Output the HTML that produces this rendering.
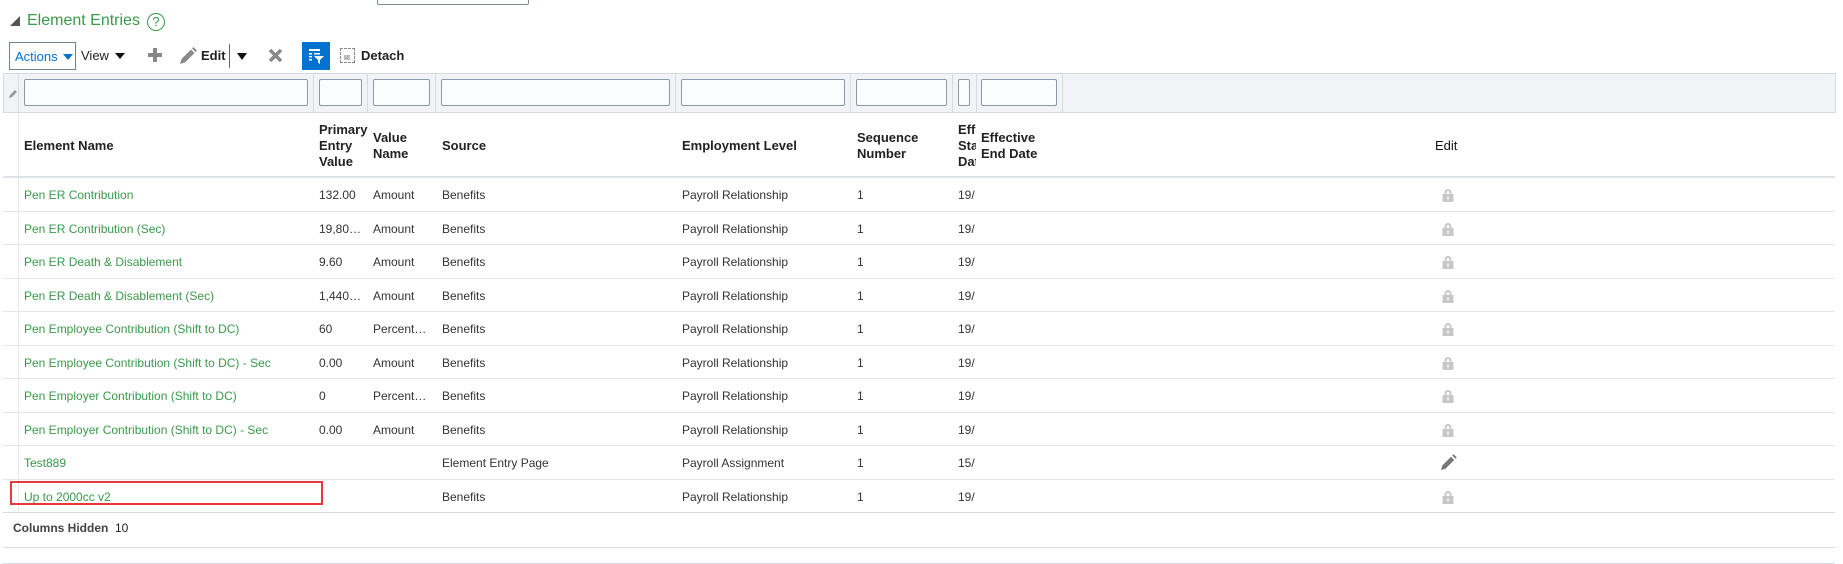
<!DOCTYPE html>
<html><head><meta charset="utf-8"><style>
*{box-sizing:border-box;margin:0;padding:0}
body{width:1843px;height:564px;background:#fff;font-family:"Liberation Sans",Arial,sans-serif;color:#333;position:relative;overflow:hidden}
.a{position:absolute}
.hl{position:absolute;height:1px;background:#e3e7ec}
.vl{position:absolute;width:1px;background:#e3e7ec}
.inp{position:absolute;top:79px;height:27px;border:1px solid #8a9aa8;border-radius:2px;background:#fbfcfd}
.t{position:absolute;font-size:12px;white-space:nowrap;line-height:14px}
.g{color:#3a9a4a}
.h{position:absolute;font-size:13px;font-weight:bold;color:#222;line-height:14px}
.lock{position:absolute;left:1441px;width:14px;height:14px}
</style></head><body>
<div class="a" style="left:377px;top:-2px;width:152px;height:7px;border:1px solid #7a8c9c;border-top:none;border-radius:0 0 2px 2px"></div>
<div class="a" style="left:10px;top:16px;width:0;height:0;border-left:10px solid transparent;border-bottom:10px solid #555"></div>
<div class="a" style="left:27px;top:12px;font-size:16px;color:#3a9a4a">Element Entries</div>
<div class="a" style="left:147px;top:13px;width:18px;height:18px;border:1.5px solid #3a9a4a;border-radius:50%;color:#3a9a4a;font-size:13px;text-align:center;line-height:15px">?</div>
<div class="a" style="left:9px;top:42px;width:67px;height:28px;border:1px solid #6f8394;font-size:13px;color:#0572ce;padding:6px 0 0 5px">Actions <span style="display:inline-block;width:0;height:0;border-left:5px solid transparent;border-right:5px solid transparent;border-top:6px solid #0572ce;vertical-align:1px;margin-left:2px"></span></div>
<div class="a" style="left:81px;top:48px;font-size:13px;color:#222">View <span style="display:inline-block;width:0;height:0;border-left:5px solid transparent;border-right:5px solid transparent;border-top:6px solid #111;vertical-align:1px;margin-left:2px"></span></div>
<svg class="a" style="left:148px;top:48px" width="14" height="14"><path d="M5 0h4v5h5v4H9v5H5V9H0V5h5z" fill="#888"/></svg>
<svg class="a" style="left:179px;top:47px" width="18" height="18"><path d="M1 17l1.5-5L12 2.5l3.5 3.5L6 15.5z M13 1.5l1.5-1.5 3.5 3.5-1.5 1.5z" fill="#8a8a8a"/></svg>
<div class="a" style="left:201px;top:48px;font-size:13px;font-weight:bold;color:#222">Edit</div>
<div class="a" style="left:229px;top:44px;width:1px;height:24px;background:#666"></div>
<div class="a" style="left:237px;top:53px;width:0;height:0;border-left:5px solid transparent;border-right:5px solid transparent;border-top:7px solid #111"></div>
<svg class="a" style="left:268px;top:48px" width="15" height="15"><path d="M2 2L13 13M13 2L2 13" stroke="#888" stroke-width="3.5"/></svg>
<div class="a" style="left:302px;top:42px;width:28px;height:28px;background:#0572ce"></div>
<svg class="a" style="left:308px;top:48px" width="17" height="16"><path d="M1 1h11v2H1zM1 5h3v1.5H1zM6 5h6v1.5H6zM1 8h3v1.5H1zM1 11h3v1.5H1z" fill="#fff"/><path d="M6 8h10l-4 4v4l-2-1.5V12z" fill="#fff"/></svg>
<div class="a" style="left:340px;top:48px;width:15px;height:15px;border:1px dashed #888"></div>
<div class="a" style="left:344px;top:55px;width:6px;height:5px;background:#bbb"></div>
<div class="a" style="left:361px;top:48px;font-size:13px;font-weight:bold;color:#222">Detach</div>
<div class="a" style="left:3px;top:73px;width:1833px;height:40px;background:#f1f3f7;border:1px solid #d6dbe1"></div>
<svg class="a" style="left:9px;top:89px" width="9" height="9"><path d="M0 9l1-3 5-5 2 2-5 5z" fill="#999"/></svg>
<div class="vl" style="left:18px;top:73px;height:40px;background:#d6dbe1"></div>
<div class="vl" style="left:313px;top:73px;height:40px;background:#d6dbe1"></div>
<div class="vl" style="left:367px;top:73px;height:40px;background:#d6dbe1"></div>
<div class="vl" style="left:435px;top:73px;height:40px;background:#d6dbe1"></div>
<div class="vl" style="left:675px;top:73px;height:40px;background:#d6dbe1"></div>
<div class="vl" style="left:850px;top:73px;height:40px;background:#d6dbe1"></div>
<div class="vl" style="left:952px;top:73px;height:40px;background:#d6dbe1"></div>
<div class="vl" style="left:976px;top:73px;height:40px;background:#d6dbe1"></div>
<div class="vl" style="left:1062px;top:73px;height:40px;background:#d6dbe1"></div>
<div class="inp" style="left:24px;width:284px"></div>
<div class="inp" style="left:319px;width:43px"></div>
<div class="inp" style="left:373px;width:57px"></div>
<div class="inp" style="left:441px;width:229px"></div>
<div class="inp" style="left:681px;width:164px"></div>
<div class="inp" style="left:856px;width:91px"></div>
<div class="inp" style="left:958px;width:12px"></div>
<div class="inp" style="left:981px;width:76px"></div>
<div class="vl" style="left:18px;top:113px;height:400px;background:#e3e7ec"></div>
<div class="h" style="left:24px;top:139px">Element Name</div>
<div class="h" style="left:319px;top:122px;line-height:16px">Primary<br>Entry<br>Value</div>
<div class="h" style="left:373px;top:130px;line-height:16px">Value<br>Name</div>
<div class="h" style="left:442px;top:139px">Source</div>
<div class="h" style="left:682px;top:139px">Employment Level</div>
<div class="h" style="left:857px;top:130px;line-height:16px">Sequence<br>Number</div>
<div class="h" style="left:958px;top:122px;line-height:16px;width:18px;overflow:hidden">Effective<br>Start<br>Date</div>
<div class="h" style="left:981px;top:130px;line-height:16px">Effective<br>End Date</div>
<div class="h" style="left:1435px;top:139px;font-weight:normal;color:#111">Edit</div>
<div class="hl" style="left:3px;top:176px;width:1832px;height:2px;background:#dfe3e8"></div>

<div class="t g" style="left:24px;top:188px">Pen ER Contribution</div><div class="t" style="left:319px;top:188px">132.00</div><div class="t" style="left:373px;top:188px">Amount</div><div class="t" style="left:442px;top:188px">Benefits</div><div class="t" style="left:682px;top:188px">Payroll Relationship</div><div class="t" style="left:857px;top:188px">1</div><div class="t" style="left:958px;top:188px">19/</div>
<div class="hl" style="left:3px;top:211px;width:1832px"></div>
<div class="t g" style="left:24px;top:222px">Pen ER Contribution (Sec)</div><div class="t" style="left:319px;top:222px">19,80…</div><div class="t" style="left:373px;top:222px">Amount</div><div class="t" style="left:442px;top:222px">Benefits</div><div class="t" style="left:682px;top:222px">Payroll Relationship</div><div class="t" style="left:857px;top:222px">1</div><div class="t" style="left:958px;top:222px">19/</div>
<div class="hl" style="left:3px;top:244px;width:1832px"></div>
<div class="t g" style="left:24px;top:255px">Pen ER Death &amp; Disablement</div><div class="t" style="left:319px;top:255px">9.60</div><div class="t" style="left:373px;top:255px">Amount</div><div class="t" style="left:442px;top:255px">Benefits</div><div class="t" style="left:682px;top:255px">Payroll Relationship</div><div class="t" style="left:857px;top:255px">1</div><div class="t" style="left:958px;top:255px">19/</div>
<div class="hl" style="left:3px;top:278px;width:1832px"></div>
<div class="t g" style="left:24px;top:289px">Pen ER Death &amp; Disablement (Sec)</div><div class="t" style="left:319px;top:289px">1,440…</div><div class="t" style="left:373px;top:289px">Amount</div><div class="t" style="left:442px;top:289px">Benefits</div><div class="t" style="left:682px;top:289px">Payroll Relationship</div><div class="t" style="left:857px;top:289px">1</div><div class="t" style="left:958px;top:289px">19/</div>
<div class="hl" style="left:3px;top:311px;width:1832px"></div>
<div class="t g" style="left:24px;top:322px">Pen Employee Contribution (Shift to DC)</div><div class="t" style="left:319px;top:322px">60</div><div class="t" style="left:373px;top:322px">Percent…</div><div class="t" style="left:442px;top:322px">Benefits</div><div class="t" style="left:682px;top:322px">Payroll Relationship</div><div class="t" style="left:857px;top:322px">1</div><div class="t" style="left:958px;top:322px">19/</div>
<div class="hl" style="left:3px;top:345px;width:1832px"></div>
<div class="t g" style="left:24px;top:356px">Pen Employee Contribution (Shift to DC) - Sec</div><div class="t" style="left:319px;top:356px">0.00</div><div class="t" style="left:373px;top:356px">Amount</div><div class="t" style="left:442px;top:356px">Benefits</div><div class="t" style="left:682px;top:356px">Payroll Relationship</div><div class="t" style="left:857px;top:356px">1</div><div class="t" style="left:958px;top:356px">19/</div>
<div class="hl" style="left:3px;top:378px;width:1832px"></div>
<div class="t g" style="left:24px;top:389px">Pen Employer Contribution (Shift to DC)</div><div class="t" style="left:319px;top:389px">0</div><div class="t" style="left:373px;top:389px">Percent…</div><div class="t" style="left:442px;top:389px">Benefits</div><div class="t" style="left:682px;top:389px">Payroll Relationship</div><div class="t" style="left:857px;top:389px">1</div><div class="t" style="left:958px;top:389px">19/</div>
<div class="hl" style="left:3px;top:412px;width:1832px"></div>
<div class="t g" style="left:24px;top:423px">Pen Employer Contribution (Shift to DC) - Sec</div><div class="t" style="left:319px;top:423px">0.00</div><div class="t" style="left:373px;top:423px">Amount</div><div class="t" style="left:442px;top:423px">Benefits</div><div class="t" style="left:682px;top:423px">Payroll Relationship</div><div class="t" style="left:857px;top:423px">1</div><div class="t" style="left:958px;top:423px">19/</div>
<div class="hl" style="left:3px;top:445px;width:1832px"></div>
<div class="t g" style="left:24px;top:456px">Test889</div><div class="t" style="left:442px;top:456px">Element Entry Page</div><div class="t" style="left:682px;top:456px">Payroll Assignment</div><div class="t" style="left:857px;top:456px">1</div><div class="t" style="left:958px;top:456px">15/</div>
<div class="hl" style="left:3px;top:479px;width:1832px"></div>
<div class="t g" style="left:24px;top:490px">Up to 2000cc v2</div><div class="t" style="left:442px;top:490px">Benefits</div><div class="t" style="left:682px;top:490px">Payroll Relationship</div><div class="t" style="left:857px;top:490px">1</div><div class="t" style="left:958px;top:490px">19/</div>
<div class="a" style="left:10px;top:481px;width:313px;height:24px;border:2px solid #e8383b"></div>
<div class="hl" style="left:3px;top:512px;width:1832px;background:#d6dbe1"></div>
<div class="t" style="left:13px;top:521px;font-weight:bold;color:#444">Columns Hidden&nbsp; <span style="font-weight:normal;color:#222">10</span></div>
<div class="hl" style="left:3px;top:547px;width:1832px;background:#d6dbe1"></div>
<div class="hl" style="left:3px;top:563px;width:1832px;background:#d6dbe1"></div>

<svg class="lock" style="top:188px" viewBox="0 0 14 14"><path d="M3.5 6V4.5a3.5 3.5 0 0 1 7 0V6h-2V4.5a1.5 1.5 0 0 0-3 0V6z" fill="#c8c8c8"/><rect x="1.5" y="6" width="11" height="8" fill="#c8c8c8"/><rect x="6.3" y="8.5" width="1.4" height="3" fill="#fff"/></svg>
<svg class="lock" style="top:222px" viewBox="0 0 14 14"><path d="M3.5 6V4.5a3.5 3.5 0 0 1 7 0V6h-2V4.5a1.5 1.5 0 0 0-3 0V6z" fill="#c8c8c8"/><rect x="1.5" y="6" width="11" height="8" fill="#c8c8c8"/><rect x="6.3" y="8.5" width="1.4" height="3" fill="#fff"/></svg>
<svg class="lock" style="top:255px" viewBox="0 0 14 14"><path d="M3.5 6V4.5a3.5 3.5 0 0 1 7 0V6h-2V4.5a1.5 1.5 0 0 0-3 0V6z" fill="#c8c8c8"/><rect x="1.5" y="6" width="11" height="8" fill="#c8c8c8"/><rect x="6.3" y="8.5" width="1.4" height="3" fill="#fff"/></svg>
<svg class="lock" style="top:289px" viewBox="0 0 14 14"><path d="M3.5 6V4.5a3.5 3.5 0 0 1 7 0V6h-2V4.5a1.5 1.5 0 0 0-3 0V6z" fill="#c8c8c8"/><rect x="1.5" y="6" width="11" height="8" fill="#c8c8c8"/><rect x="6.3" y="8.5" width="1.4" height="3" fill="#fff"/></svg>
<svg class="lock" style="top:322px" viewBox="0 0 14 14"><path d="M3.5 6V4.5a3.5 3.5 0 0 1 7 0V6h-2V4.5a1.5 1.5 0 0 0-3 0V6z" fill="#c8c8c8"/><rect x="1.5" y="6" width="11" height="8" fill="#c8c8c8"/><rect x="6.3" y="8.5" width="1.4" height="3" fill="#fff"/></svg>
<svg class="lock" style="top:356px" viewBox="0 0 14 14"><path d="M3.5 6V4.5a3.5 3.5 0 0 1 7 0V6h-2V4.5a1.5 1.5 0 0 0-3 0V6z" fill="#c8c8c8"/><rect x="1.5" y="6" width="11" height="8" fill="#c8c8c8"/><rect x="6.3" y="8.5" width="1.4" height="3" fill="#fff"/></svg>
<svg class="lock" style="top:389px" viewBox="0 0 14 14"><path d="M3.5 6V4.5a3.5 3.5 0 0 1 7 0V6h-2V4.5a1.5 1.5 0 0 0-3 0V6z" fill="#c8c8c8"/><rect x="1.5" y="6" width="11" height="8" fill="#c8c8c8"/><rect x="6.3" y="8.5" width="1.4" height="3" fill="#fff"/></svg>
<svg class="lock" style="top:423px" viewBox="0 0 14 14"><path d="M3.5 6V4.5a3.5 3.5 0 0 1 7 0V6h-2V4.5a1.5 1.5 0 0 0-3 0V6z" fill="#c8c8c8"/><rect x="1.5" y="6" width="11" height="8" fill="#c8c8c8"/><rect x="6.3" y="8.5" width="1.4" height="3" fill="#fff"/></svg>
<svg class="a" style="left:1440px;top:454px" width="17" height="17"><path d="M1 16l1.3-4.5L11 2.8l3.2 3.2L5.5 14.7z M12.2 1.6l1.4-1.4 3.2 3.2-1.4 1.4z" fill="#777"/></svg>
<svg class="lock" style="top:490px" viewBox="0 0 14 14"><path d="M3.5 6V4.5a3.5 3.5 0 0 1 7 0V6h-2V4.5a1.5 1.5 0 0 0-3 0V6z" fill="#c8c8c8"/><rect x="1.5" y="6" width="11" height="8" fill="#c8c8c8"/><rect x="6.3" y="8.5" width="1.4" height="3" fill="#fff"/></svg>
</body></html>
